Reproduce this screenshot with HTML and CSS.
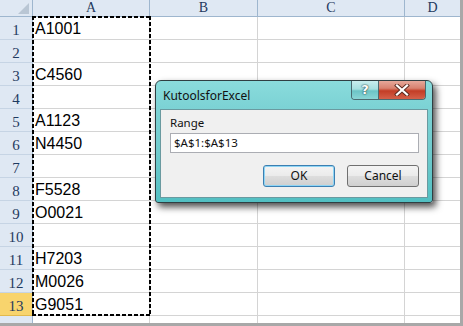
FILE: index.html
```html
<!DOCTYPE html>
<html>
<head>
<meta charset="utf-8">
<link rel="stylesheet" href="styles.css">
</head>
<body>
<div class="sheet">
  <div class="grid">
    <div class="corner"><span class="tri"></span></div>
    <div class="colhead">A</div>
    <div class="colhead">B</div>
    <div class="colhead">C</div>
    <div class="colhead last">D</div>

    <div class="rowhead">1</div><div class="cell">A1001</div><div class="cell"></div><div class="cell"></div><div class="cell"></div>
    <div class="rowhead">2</div><div class="cell"></div><div class="cell"></div><div class="cell"></div><div class="cell"></div>
    <div class="rowhead">3</div><div class="cell">C4560</div><div class="cell"></div><div class="cell"></div><div class="cell"></div>
    <div class="rowhead">4</div><div class="cell"></div><div class="cell"></div><div class="cell"></div><div class="cell"></div>
    <div class="rowhead">5</div><div class="cell">A1123</div><div class="cell"></div><div class="cell"></div><div class="cell"></div>
    <div class="rowhead">6</div><div class="cell">N4450</div><div class="cell"></div><div class="cell"></div><div class="cell"></div>
    <div class="rowhead">7</div><div class="cell"></div><div class="cell"></div><div class="cell"></div><div class="cell"></div>
    <div class="rowhead">8</div><div class="cell">F5528</div><div class="cell"></div><div class="cell"></div><div class="cell"></div>
    <div class="rowhead">9</div><div class="cell">O0021</div><div class="cell"></div><div class="cell"></div><div class="cell"></div>
    <div class="rowhead">10</div><div class="cell"></div><div class="cell"></div><div class="cell"></div><div class="cell"></div>
    <div class="rowhead">11</div><div class="cell">H7203</div><div class="cell"></div><div class="cell"></div><div class="cell"></div>
    <div class="rowhead">12</div><div class="cell">M0026</div><div class="cell"></div><div class="cell"></div><div class="cell"></div>
    <div class="rowhead active">13</div><div class="cell">G9051</div><div class="cell"></div><div class="cell"></div><div class="cell"></div>
    <div class="rowhead">14</div><div class="cell"></div><div class="cell"></div><div class="cell"></div><div class="cell"></div>
  </div>
  <div class="ants"></div>

  <div class="dialog">
    <div class="titlebar">
      <span class="title">KutoolsforExcel</span>
      <div class="capbtns">
        <span class="help">?</span>
        <span class="close">
          <svg width="16" height="12" viewBox="0 0 16 12">
            <path d="M3 1.5 L13 10.5 M13 1.5 L3 10.5" stroke="#5a2a20" stroke-width="4" stroke-linecap="square"/>
            <path d="M3 1.5 L13 10.5 M13 1.5 L3 10.5" stroke="#ffffff" stroke-width="2.2" stroke-linecap="square"/>
          </svg>
        </span>
      </div>
    </div>
    <div class="panel">
      <div class="label">Range</div>
      <div class="input">$A$1:$A$13</div>
      <div class="buttons">
        <span class="btn default">OK</span>
        <span class="btn">Cancel</span>
      </div>
    </div>
  </div>
</div>
</body>
</html>
```

FILE: styles.css
```css
* { box-sizing: border-box; }
html, body { margin: 0; padding: 0; }
body {
  width: 463px;
  height: 326px;
  background: #a8a8a8;
  overflow: hidden;
}
.sheet {
  position: relative;
  width: 460px;
  height: 323px;
  background: #fff;
  overflow: hidden;
}
.grid {
  display: grid;
  grid-template-columns: 33px 117px 108px 147px 56px;
  grid-template-rows: 17px repeat(14, 23px);
}
.corner {
  position: relative;
  background: #dfe8f3;
  border-right: 1px solid #9eb6ce;
  border-bottom: 1px solid #9eb6ce;
}
.tri {
  position: absolute;
  right: 3px;
  bottom: 2px;
  width: 0;
  height: 0;
  border-left: 11px solid transparent;
  border-bottom: 11px solid #b9c6d4;
}
.colhead {
  background: #dfe8f3;
  border-right: 1px solid #9eb6ce;
  border-bottom: 1px solid #9eb6ce;
  font-family: "Liberation Serif", serif;
  font-size: 14px;
  color: #1f3a60;
  text-align: center;
  line-height: 16px;
}
.colhead.last { border-right: 1px solid #c8d5e4; }
.rowhead {
  background: #dfe8f3;
  border-right: 1px solid #9eb6ce;
  border-bottom: 1px solid #c6d4e4;
  font-family: "Liberation Serif", serif;
  font-size: 15px;
  color: #1f3a60;
  text-align: center;
  line-height: 22px;
  padding-top: 2px;
}
.rowhead.active {
  background: #f8d46d;
  border-bottom-color: #e2b94c;
}
.cell {
  border-right: 1px solid #d4d4d4;
  border-bottom: 1px solid #d4d4d4;
  font-family: "Liberation Sans", Arial, sans-serif;
  font-size: 16px;
  color: #000;
  line-height: 22px;
  padding-left: 2px;
  padding-top: 1px;
}
.ants {
  position: absolute;
  left: 32px;
  top: 16px;
  width: 119px;
  height: 300px;
  background:
    repeating-linear-gradient(90deg, #000 0 4px, transparent 4px 6px) top left / 100% 2px no-repeat,
    repeating-linear-gradient(90deg, #000 0 4px, transparent 4px 6px) bottom left / 100% 2px no-repeat,
    repeating-linear-gradient(180deg, #000 0 4px, transparent 4px 6px) top left / 2px 100% no-repeat,
    repeating-linear-gradient(180deg, #000 0 4px, transparent 4px 6px) top right / 2px 100% no-repeat;
  pointer-events: none;
}

.dialog {
  position: absolute;
  left: 155px;
  top: 80px;
  width: 278px;
  height: 123px;
  border: 1px solid #2f3f42;
  border-radius: 6px 6px 3px 3px;
  background: linear-gradient(180deg, #8adcdc 0%, #7dd3d5 20%, #6fcacc 60%, #52bfc2 100%);
  box-shadow: 3px 4px 7px rgba(0,0,0,0.7);
  display: flex;
  flex-direction: column;
  padding: 0 4px 4px 4px;
}
.titlebar {
  height: 28px;
  display: flex;
  align-items: flex-start;
  justify-content: space-between;
  flex: none;
}
.title {
  font-family: "Noto Sans", "Open Sans", sans-serif;
  font-size: 12px;
  color: #111;
  padding-left: 3px;
  padding-top: 6px;
}
.capbtns {
  display: flex;
  margin-right: 2px;
  border: 1px solid #4a6a70;
  border-top: none;
  border-radius: 0 0 4px 4px;
  overflow: hidden;
  height: 19px;
}
.help {
  width: 27px;
  height: 18px;
  background: linear-gradient(180deg, #c8eeee 0%, #a6e0e0 45%, #6cc4c6 55%, #8ad6d6 100%);
  border-right: 1px solid #4a6a70;
  font-family: "DejaVu Sans", sans-serif;
  font-weight: bold;
  font-size: 13px;
  color: #fff;
  text-shadow: 0 0 2px #244, 0 0 1px #244;
  text-align: center;
  line-height: 18px;
}
.close {
  width: 46px;
  height: 18px;
  background: linear-gradient(180deg, #e6a89a 0%, #d88270 40%, #c33d26 55%, #d4614a 100%);
  display: flex;
  align-items: center;
  justify-content: center;
}
.panel {
  flex: 1;
  background: #f0f0f0;
  border: 1px solid #6a9aa0;
  padding: 5px 8px 0 9px;
  display: flex;
  flex-direction: column;
}
.label {
  font-family: "Noto Sans", "Open Sans", sans-serif;
  font-size: 11.5px;
  color: #111;
  line-height: 16px;
}
.input {
  margin-top: 2px;
  height: 20px;
  background: #fff;
  border: 1px solid #abadb3;
  font-family: "Noto Sans", "Open Sans", sans-serif;
  font-size: 11.5px;
  line-height: 18px;
  color: #111;
  padding-left: 3px;
}
.buttons {
  display: flex;
  justify-content: flex-end;
  gap: 12px;
  margin-top: 12px;
}
.btn {
  width: 72px;
  height: 22px;
  border: 1px solid #707070;
  border-radius: 3px;
  background: linear-gradient(180deg, #f4f4f4 0%, #ebebeb 48%, #dddddd 52%, #cfcfcf 100%);
  font-family: "Noto Sans", "Open Sans", sans-serif;
  font-size: 12px;
  color: #111;
  text-align: center;
  line-height: 20px;
}
.btn.default {
  border-color: #3c7fb1;
  box-shadow: inset 0 0 0 1px #8fd5f5;
}
```
